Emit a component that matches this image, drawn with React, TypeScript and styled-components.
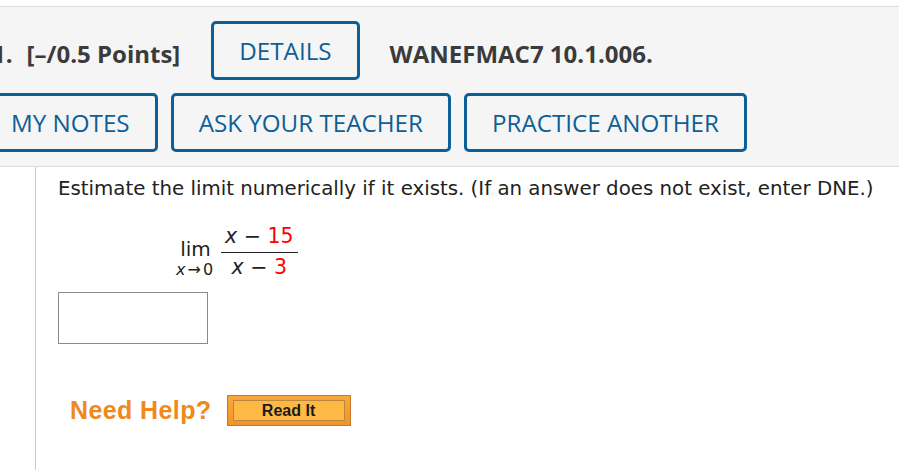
import React from "react";
import styled, { createGlobalStyle } from "styled-components";

const GlobalStyle = createGlobalStyle`
  html, body { margin: 0; padding: 0; background: #ffffff; }
  body { font-family: "Open Sans", "Liberation Sans", sans-serif; }
`;

const Page = styled.div`
  width: 899px;
  height: 470px;
  overflow: hidden;
  padding-top: 6px;
  box-sizing: border-box;
  display: flex;
  flex-direction: column;
`;

const Header = styled.div`
  background: #f5f5f5;
  border-top: 1px solid #dcdcdc;
  border-bottom: 1px solid #dcdcdc;
  padding: 14px 0 14px 0;
`;

const HeaderInner = styled.div`
  margin-left: -17px;
  display: flex;
  flex-direction: column;
  gap: 13px;
`;

const TitleRow = styled.div`
  display: flex;
  align-items: center;
  padding-left: 9px;
`;

const ActionRow = styled.div`
  display: flex;
  align-items: center;
  gap: 13px;
`;

const TitleText = styled.span<{ $gapBefore?: number; $gapAfter?: number }>`
  font-family: "Open Sans", sans-serif;
  font-weight: 700;
  font-size: 24px;
  color: #3b3b3b;
  padding-top: 6px;
  margin-left: ${(p) => p.$gapBefore ?? 0}px;
  margin-right: ${(p) => p.$gapAfter ?? 0}px;
  white-space: nowrap;
`;

const OutlineButton = styled.button`
  height: 59px;
  box-sizing: border-box;
  border: 3px solid #0d5f97;
  border-radius: 5px;
  background: transparent;
  color: #0d5f97;
  font-family: "Open Sans", sans-serif;
  font-size: 24.2px;
  font-weight: 400;
  padding: 0 25px;
  white-space: nowrap;
  display: flex;
  align-items: center;
`;

const Body = styled.div`
  flex: 1;
  display: flex;
`;

const Rail = styled.div`
  width: 35px;
  border-right: 1px solid #cccccc;
  flex-shrink: 0;
`;

const Content = styled.div`
  flex: 1;
  padding: 7px 0 0 22px;
  font-family: "DejaVu Sans", Verdana, sans-serif;
  color: #222;
`;

const Prompt = styled.p`
  margin: 0;
  font-size: 19.8px;
  line-height: 30px;
  white-space: nowrap;
`;

const MathBlock = styled.div`
  display: flex;
  align-items: flex-start;
  margin: 20px 0 0 118px;
  font-family: "DejaVu Sans", Verdana, sans-serif;
  color: #222;
`;

const LimCol = styled.div`
  display: flex;
  flex-direction: column;
  align-items: center;
  margin-top: 16px;
  margin-right: 6px;
`;

const Lim = styled.span`
  font-size: 20px;
  line-height: 18px;
`;

const LimSub = styled.span`
  font-size: 16px;
  line-height: 18px;
  margin-top: 3px;
  letter-spacing: 2px;
`;

const Fraction = styled.div`
  display: flex;
  flex-direction: column;
  align-items: center;
`;

const FracPart = styled.span<{ $top?: boolean }>`
  font-size: 20.5px;
  line-height: 24px;
  padding: 0 4px;
  white-space: nowrap;
  border-bottom: ${(p) => (p.$top ? "1px solid #222" : "none")};
  padding-bottom: ${(p) => (p.$top ? "4px" : "0")};
  padding-top: ${(p) => (p.$top ? "0" : "2px")};
`;

const Var = styled.i`
  font-style: italic;
`;

const Red = styled.span`
  color: #ff0000;
`;

const AnswerBox = styled.input`
  display: block;
  margin-top: 13px;
  width: 150px;
  height: 52px;
  box-sizing: border-box;
  border: 1px solid #8a8a8a;
  background: #fff;
`;

const HelpRow = styled.div`
  display: flex;
  align-items: center;
  gap: 15px;
  margin: 51px 0 0 12px;
`;

const NeedHelp = styled.span`
  font-family: "Liberation Sans", Arial, sans-serif;
  font-weight: 700;
  font-size: 25px;
  letter-spacing: 0.4px;
  color: #ee8a1c;
`;

const ReadItOuter = styled.div`
  width: 124px;
  height: 31px;
  box-sizing: border-box;
  border: 1px solid #c47a2c;
  background: linear-gradient(#f7a83a, #f29427);
  padding: 4px 5px 4px 5px;
  display: flex;
`;

const ReadItInner = styled.button`
  flex: 1;
  border: 1px solid #b9873d;
  background: #fdb944;
  font-family: "Liberation Sans", Arial, sans-serif;
  font-weight: 700;
  font-size: 16px;
  color: #1a1a1a;
  padding: 0;
  display: flex;
  align-items: center;
  justify-content: center;
`;

export default function App() {
  return (
    <>
      <GlobalStyle />
      <Page>
        <Header>
          <HeaderInner>
            <TitleRow>
              <TitleText $gapAfter={14}>1.</TitleText>
              <TitleText $gapAfter={31}>[–/0.5 Points]</TitleText>
              <OutlineButton>DETAILS</OutlineButton>
              <TitleText $gapBefore={30}>WANEFMAC7 10.1.006.</TitleText>
            </TitleRow>
            <ActionRow>
              <OutlineButton>MY NOTES</OutlineButton>
              <OutlineButton>ASK YOUR TEACHER</OutlineButton>
              <OutlineButton>PRACTICE ANOTHER</OutlineButton>
            </ActionRow>
          </HeaderInner>
        </Header>
        <Body>
          <Rail />
          <Content>
            <Prompt>
              Estimate the limit numerically if it exists. (If an answer does not exist, enter DNE.)
            </Prompt>
            <MathBlock>
              <LimCol>
                <Lim>lim</Lim>
                <LimSub>
                  <Var>x</Var>→0
                </LimSub>
              </LimCol>
              <Fraction>
                <FracPart $top>
                  <Var>x</Var> − <Red>15</Red>
                </FracPart>
                <FracPart>
                  <Var>x</Var> − <Red>3</Red>
                </FracPart>
              </Fraction>
            </MathBlock>
            <AnswerBox type="text" aria-label="answer" />
            <HelpRow>
              <NeedHelp>Need Help?</NeedHelp>
              <ReadItOuter>
                <ReadItInner>Read It</ReadItInner>
              </ReadItOuter>
            </HelpRow>
          </Content>
        </Body>
      </Page>
    </>
  );
}
